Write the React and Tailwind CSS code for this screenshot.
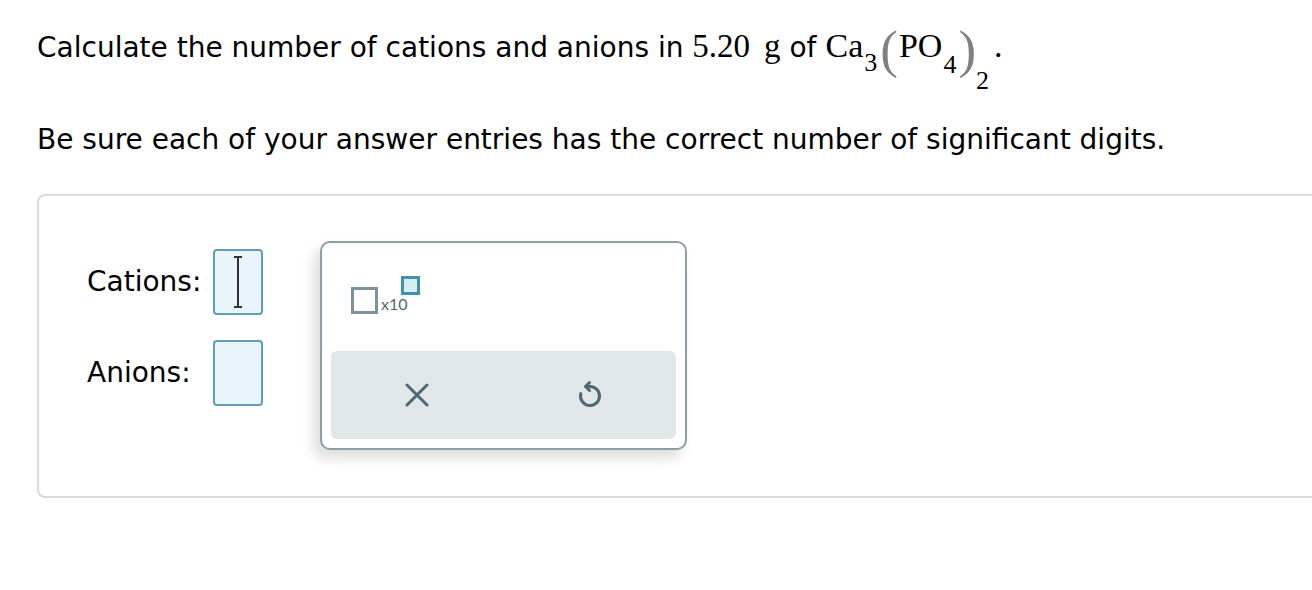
const sans = { fontFamily: '"DejaVu Sans", Verdana, sans-serif' }
const serif = { fontFamily: '"Liberation Serif", "Times New Roman", serif' }

function AnswerBox({ active }) {
  return (
    <div className="relative w-[50px] h-[66px] rounded-[4px] border-2 border-[#5f9fb0] bg-[#e9f5fa]">
      {active && (
        <div className="absolute left-1/2 top-[5px] bottom-[5px] w-[2px] -translate-x-1/2 bg-[#333]">
          <div className="absolute top-0 left-1/2 -translate-x-1/2 w-[8px] h-[2px] bg-[#333]" />
          <div className="absolute bottom-0 left-1/2 -translate-x-1/2 w-[8px] h-[2px] bg-[#333]" />
        </div>
      )}
    </div>
  )
}

function UndoIcon() {
  return (
    <svg width="30" height="30" viewBox="0 0 30 30" fill="none" stroke="#4d6872" strokeWidth="3" strokeLinecap="round" strokeLinejoin="round">
      <path d="M15 6.5 A9.5 9.5 0 1 1 5.8 13.6" />
      <path d="M15 6.5 H11" />
      <path d="M14.5 2.5 L10.5 6.5 L14.5 10.5" />
    </svg>
  )
}

function CloseIcon() {
  return (
    <svg width="24" height="24" viewBox="0 0 24 24" fill="none" stroke="#4d6872" strokeWidth="3" strokeLinecap="round">
      <path d="M2 2 L22 22 M22 2 L2 22" />
    </svg>
  )
}

export default function App() {
  return (
    <div className="bg-white w-[1312px] h-[590px] overflow-hidden text-black">
      <div className="pl-[37px] pt-[26px]" style={sans}>
        <p className="text-[28px] leading-[40px] whitespace-nowrap">
          Calculate the number of cations and anions in{' '}
          <span className="text-[33px]" style={serif}>5.20</span>
          <span className="text-[33px] ml-[14px]" style={serif}>g</span>
          {' '}of
          <span className="text-[34px] ml-[9px]" style={serif}>
            <span>Ca</span>
            <span className="text-[26px] leading-[0] relative top-[14px] ml-[1px]">3</span>
            <span className="text-[53px] leading-[0] text-[#808080] relative top-[10px] ml-[3px]">(</span>
            <span className="ml-[1px]">PO</span>
            <span className="text-[26px] leading-[0] relative top-[16px] ml-[1px]">4</span>
            <span className="text-[53px] leading-[0] text-[#808080] relative top-[10px] ml-[2px]">)</span>
            <span className="text-[26px] leading-[0] relative top-[32px]">2</span>
            <span className="ml-[5px]">.</span>
          </span>
        </p>
        <p className="mt-[52px] text-[28px] leading-[40px] whitespace-nowrap">
          Be sure each of your answer entries has the correct number of significant digits.
        </p>
      </div>

      <div className="ml-[37px] mt-[34px] h-[304px] rounded-l-[8px] border-2 border-r-0 border-[#d6dbde] flex">
        <div className="pl-[48px] pt-[53px] flex flex-col gap-[25px]" style={sans}>
          <div className="flex items-center gap-[10px]">
            <span className="text-[28px] w-[116px]">Cations:</span>
            <AnswerBox active />
          </div>
          <div className="flex items-center gap-[10px]">
            <span className="text-[28px] w-[116px]">Anions:</span>
            <AnswerBox />
          </div>
        </div>

        <div className="ml-[57px] mt-[45px] w-[367px] h-[209px] rounded-[10px] border-2 border-[#8a9fa7] bg-white shadow-[-6px_8px_14px_rgba(0,0,0,0.14)] px-[9px] pt-[33px] pb-[8px]">
          <div className="flex items-end pl-[20px] h-[38px]">
            <div className="w-[27px] h-[27px] border-[3px] border-[#7b929a] bg-white" />
            <span className="text-[16px] leading-none text-[#4f6871] ml-[3px] mb-[2px]" style={{ fontFamily: 'Lato, sans-serif' }}>x10</span>
            <div className="w-[19px] h-[19px] border-[3px] border-[#3f94aa] bg-[#d6edf3] self-start ml-[-7px]" />
          </div>
          <div className="mt-[37px] h-[88px] rounded-[6px] bg-[#e1e6e9] flex items-center">
            <div className="w-1/2 flex justify-center">
              <CloseIcon />
            </div>
            <div className="w-1/2 flex justify-center">
              <UndoIcon />
            </div>
          </div>
        </div>
      </div>
    </div>
  )
}
